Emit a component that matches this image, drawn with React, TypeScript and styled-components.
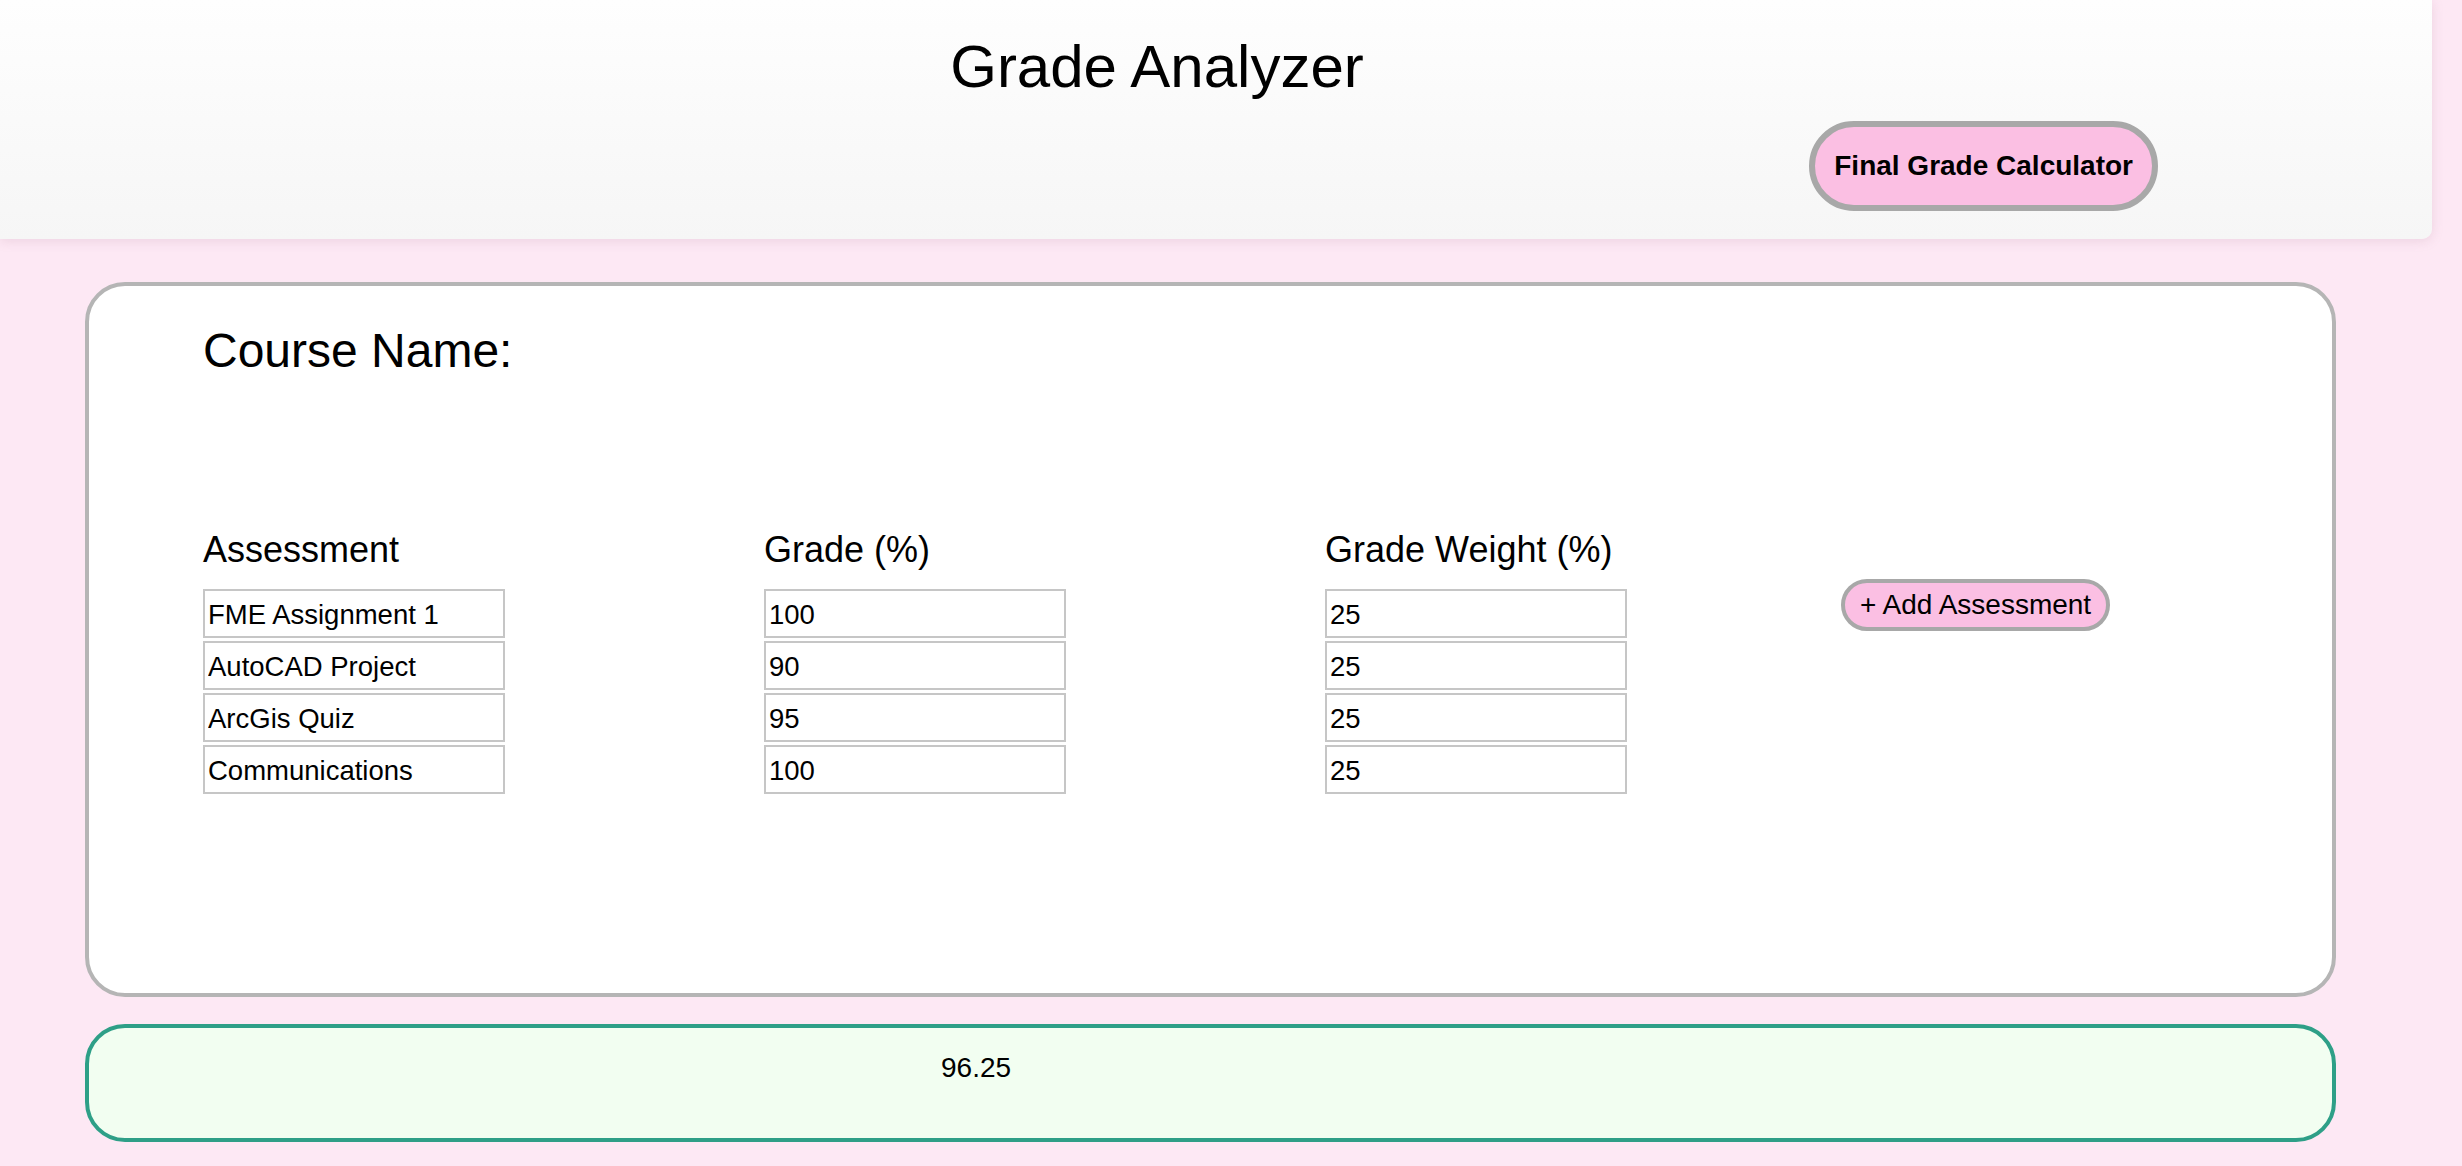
import { useState } from 'react';
import styled, { createGlobalStyle } from 'styled-components';

interface Assessment {
  name: string;
  grade: string;
  weight: string;
}

const initialAssessments: Assessment[] = [
  { name: 'FME Assignment 1', grade: '100', weight: '25' },
  { name: 'AutoCAD Project', grade: '90', weight: '25' },
  { name: 'ArcGis Quiz', grade: '95', weight: '25' },
  { name: 'Communications', grade: '100', weight: '25' },
];

const App = () => {
  const [assessments, setAssessments] = useState<Assessment[]>(initialAssessments);

  const updateField = (index: number, field: keyof Assessment, value: string) => {
    setAssessments((prev) => prev.map((a, i) => (i === index ? { ...a, [field]: value } : a)));
  };

  const addAssessment = () => {
    setAssessments((prev) => [...prev, { name: '', grade: '', weight: '' }]);
  };

  const finalGrade = assessments.reduce((sum, a) => {
    const grade = parseFloat(a.grade) || 0;
    const weight = parseFloat(a.weight) || 0;
    return sum + (grade * weight) / 100;
  }, 0);

  const columns: { title: string; field: keyof Assessment }[] = [
    { title: 'Assessment', field: 'name' },
    { title: 'Grade (%)', field: 'grade' },
    { title: 'Grade Weight (%)', field: 'weight' },
  ];

  return (
    <>
      <GlobalStyle />
      <StHeader>
        <StTitle>Grade Analyzer</StTitle>
        <StNavButton>Final Grade Calculator</StNavButton>
      </StHeader>
      <StCourseCard>
        <StCourseName>Course Name:</StCourseName>
        <StTable>
          {columns.map((col) => (
            <StColumn key={col.field}>
              <StColumnTitle>{col.title}</StColumnTitle>
              <StInputList>
                {assessments.map((a, i) => (
                  <StCell
                    key={i}
                    value={a[col.field]}
                    onChange={(e) => updateField(i, col.field, e.target.value)}
                  />
                ))}
              </StInputList>
            </StColumn>
          ))}
          <StAddButton onClick={addAssessment}>+ Add Assessment</StAddButton>
        </StTable>
      </StCourseCard>
      <StResult>{Number(finalGrade.toFixed(2))}</StResult>
    </>
  );
};

const GlobalStyle = createGlobalStyle`
  body {
    margin: 0;
    background: #fde8f4;
    font-family: "Liberation Sans", Arial, Helvetica, sans-serif;
    color: #000;
  }
`;

const StHeader = styled.header`
  width: calc(100% - 30px);
  height: 239px;
  box-sizing: border-box;
  padding-top: 32px;
  display: flex;
  flex-direction: column;
  background: linear-gradient(#fefefe, #f6f6f6);
  border-bottom-right-radius: 10px;
  box-shadow: 0 2px 12px rgba(160, 110, 140, 0.18);
`;

const StTitle = styled.h1`
  margin: 0 118px 0 0;
  font-size: 60px;
  line-height: 69px;
  font-weight: normal;
  text-align: center;
`;

const StNavButton = styled.button`
  align-self: flex-end;
  margin: 20px 274px 0 0;
  padding: 23px 19px;
  font-family: inherit;
  font-size: 28px;
  line-height: 32px;
  font-weight: bold;
  color: #000;
  background: #fbbfe3;
  border: 6px solid #a8a8a8;
  border-radius: 45px;
  cursor: pointer;
`;

const StCourseCard = styled.section`
  margin: 43px 126px 0 85px;
  padding: 37px 0 199px 114px;
  background: #fff;
  border: 4px solid #b5b5b5;
  border-radius: 40px;
`;

const StCourseName = styled.h2`
  margin: 0;
  font-size: 48px;
  line-height: 55px;
  font-weight: normal;
`;

const StTable = styled.div`
  margin-top: 152px;
  display: grid;
  grid-template-columns: 561px 561px 516px auto;
  align-items: start;
`;

const StColumn = styled.div`
  display: flex;
  flex-direction: column;
`;

const StColumnTitle = styled.h3`
  margin: 0 0 19px;
  font-size: 36px;
  line-height: 40px;
  font-weight: normal;
`;

const StInputList = styled.div`
  display: flex;
  flex-direction: column;
  gap: 3px;
`;

const StCell = styled.input`
  width: 302px;
  height: 49px;
  box-sizing: border-box;
  padding: 2px 3px 0;
  font-family: inherit;
  font-size: 27.5px;
  color: #000;
  background: #fff;
  border: 2px solid #c6c6c6;
  outline: none;
`;

const StAddButton = styled.button`
  justify-self: start;
  margin-top: 49px;
  padding: 7px 15px;
  font-family: inherit;
  font-size: 28px;
  line-height: 30px;
  color: #000;
  background: #fbbfe3;
  border: 4px solid #a8a8a8;
  border-radius: 27px;
  cursor: pointer;
`;

const StResult = styled.div`
  margin: 27px 126px 0 85px;
  height: 118px;
  box-sizing: border-box;
  padding: 24px 0 0 852px;
  font-size: 28px;
  line-height: 31px;
  background: #f2fef1;
  border: 4px solid #2e9f87;
  border-radius: 40px;
`;

export default App;
